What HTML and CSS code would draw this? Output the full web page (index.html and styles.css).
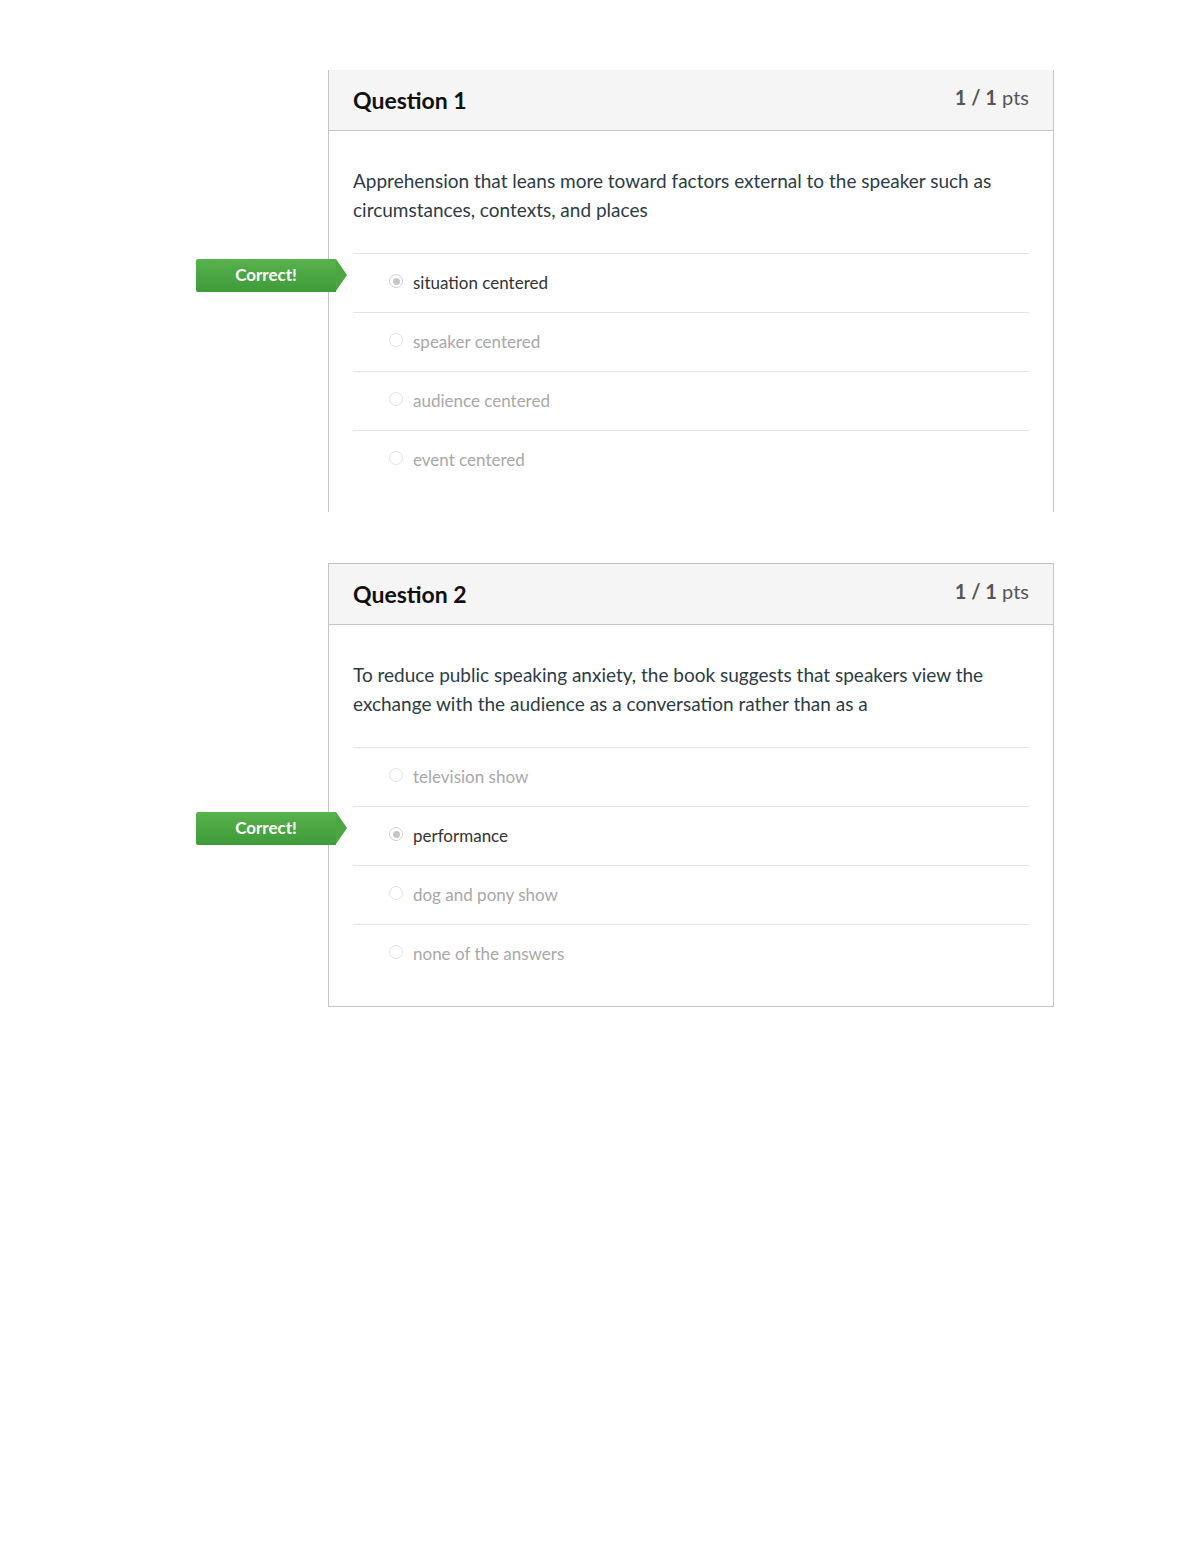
FILE: index.html
```html
<!DOCTYPE html>
<html>
<head>
<meta charset="utf-8">
<link rel="stylesheet" href="styles.css">
</head>
<body>
<div class="page">
  <div class="card card-cut">
    <div class="card-head">
      <div class="q-title">Question 1</div>
      <div class="q-pts"><b>1 / 1</b> pts</div>
    </div>
    <div class="card-body">
      <div class="q-text">Apprehension that leans more toward factors external to the speaker such as circumstances, contexts, and places</div>
      <div class="answers">
        <div class="answer selected"><span class="badge">Correct!</span><span class="radio"></span><span class="a-text">situation centered</span></div>
        <div class="answer"><span class="radio"></span><span class="a-text">speaker centered</span></div>
        <div class="answer"><span class="radio"></span><span class="a-text">audience centered</span></div>
        <div class="answer"><span class="radio"></span><span class="a-text">event centered</span></div>
      </div>
    </div>
  </div>

  <div class="card card-full">
    <div class="card-head">
      <div class="q-title">Question 2</div>
      <div class="q-pts"><b>1 / 1</b> pts</div>
    </div>
    <div class="card-body">
      <div class="q-text">To reduce public speaking anxiety, the book suggests that speakers view the exchange with the audience as a conversation rather than as a</div>
      <div class="answers">
        <div class="answer"><span class="radio"></span><span class="a-text">television show</span></div>
        <div class="answer selected"><span class="badge">Correct!</span><span class="radio"></span><span class="a-text">performance</span></div>
        <div class="answer"><span class="radio"></span><span class="a-text">dog and pony show</span></div>
        <div class="answer"><span class="radio"></span><span class="a-text">none of the answers</span></div>
      </div>
    </div>
  </div>
</div>
</body>
</html>
```
FILE: styles.css
```css
html, body {
  margin: 0;
  padding: 0;
  background: #ffffff;
}
body {
  font-family: Lato, "Open Sans", "Liberation Sans", sans-serif;
  color: #2d3b45;
}
.page {
  padding: 70px 0 0 328px;
  display: flex;
  flex-direction: column;
  gap: 51px;
}
.card {
  width: 724px;
  border-left: 1px solid #c4c4c4;
  border-right: 1px solid #c4c4c4;
  background: #fff;
}
.card-cut {
  height: 442px;
}
.card-full {
  border-top: 1px solid #c4c4c4;
  border-bottom: 1px solid #c4c4c4;
  padding-bottom: 23px;
}
.card-head {
  height: 60px;
  background: #f5f5f5;
  border-bottom: 1px solid #c4c4c4;
  display: flex;
  justify-content: space-between;
  align-items: flex-start;
  padding: 0 24px;
}
.q-title {
  font-size: 23px;
  font-weight: 700;
  color: #111;
  margin-top: 17px;
  line-height: 26px;
}
.q-pts {
  font-size: 20px;
  color: #555;
  margin-top: 14px;
  line-height: 26px;
}
.q-pts b {
  font-weight: 700;
}
.card-body {
  padding: 35px 24px 0 24px;
}
.q-text {
  font-size: 19px;
  line-height: 29px;
  color: #2d3b45;
  padding-right: 20px;
}
.answers {
  margin-top: 29px;
}
.answer {
  position: relative;
  height: 58px;
  border-top: 1px solid #e4e4e4;
  display: flex;
  align-items: center;
  padding-left: 36px;
  gap: 10px;
  color: #a8a8a8;
  font-size: 17px;
}
.answer.selected {
  color: #333;
}
.radio {
  width: 14px;
  height: 14px;
  border-radius: 50%;
  border: 1px solid #e2e2e2;
  box-sizing: border-box;
  position: relative;
  top: -2px;
  background: #fff;
  flex: none;
}
.selected .radio {
  border-color: #d0d0d0;
}
.selected .radio::after {
  content: "";
  position: absolute;
  left: 2.5px;
  top: 2.5px;
  width: 7px;
  height: 7px;
  border-radius: 50%;
  background: #c6c6c6;
}
.a-text {
  position: relative;
  top: -1px;
}
.badge {
  position: absolute;
  left: -157px;
  top: 5px;
  width: 140px;
  height: 33px;
  box-sizing: border-box;
  background: linear-gradient(#58b24e, #3e9b37);
  color: #fff;
  font-weight: 700;
  font-size: 17px;
  line-height: 31px;
  text-align: center;
  border-radius: 2px 0 0 2px;
}
.badge::after {
  content: "";
  position: absolute;
  right: -11px;
  top: 0;
  width: 0;
  height: 0;
  border-top: 16.5px solid transparent;
  border-bottom: 16.5px solid transparent;
  border-left: 11px solid #4ba742;
}
```
